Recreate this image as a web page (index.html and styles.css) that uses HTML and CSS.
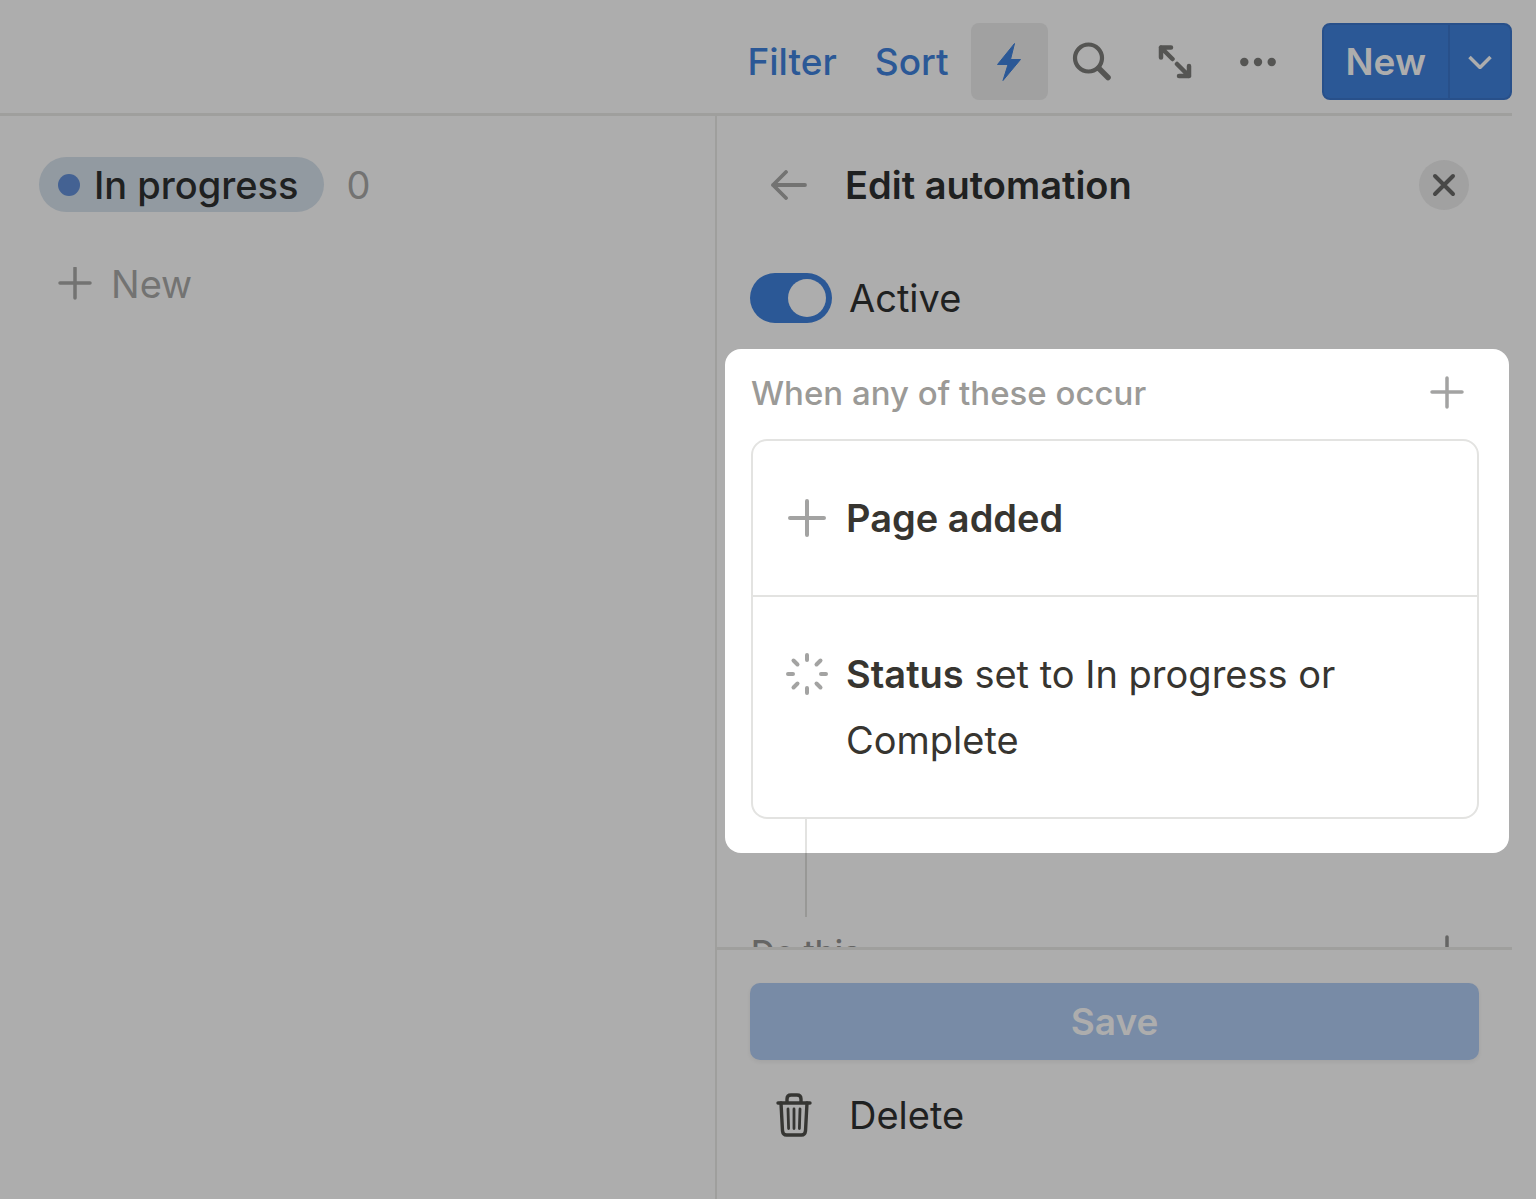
FILE: index.html
```html
<!DOCTYPE html>
<html lang="en">
<head>
    <meta charset="UTF-8">
    <meta name="viewport" content="width=device-width, initial-scale=1.0">
    <title>Edit automation</title>
    <link rel="stylesheet" href="styles.css">
</head>
<body>
<div class="app">
    <header class="toolbar">
        <button type="button" class="text-btn">Filter</button>
        <button type="button" class="text-btn">Sort</button>
        <button type="button" class="icon-btn active" aria-label="Automations">
            <svg width="24" height="38" viewBox="0 0 24 38" fill="#2b5896" stroke="#2b5896" stroke-linejoin="round">
                <path d="M17.5 .5.5 21.5h10.5L6 37.5l17.5-21h-10z"/>
            </svg>
        </button>
        <button type="button" class="icon-btn" aria-label="Search">
            <svg width="40" height="40" viewBox="0 0 40 40" fill="none" stroke="#555553" stroke-linecap="round">
                <circle cx="16.5" cy="16" r="13.5" stroke-width="4.2"/>
                <path d="M27 26.5l9 9" stroke-width="5.5"/>
            </svg>
        </button>
        <button type="button" class="icon-btn" aria-label="Expand">
            <svg width="34" height="34" viewBox="0 0 34 34" fill="none" stroke="#555553" stroke-width="4.5" stroke-linecap="round" stroke-linejoin="round">
                <path d="M3 12.500V2.500h10M3 2.500l11.500 11.500"/>
                <path d="M31 21v10H21M31 31 19 19"/>
            </svg>
        </button>
        <button type="button" class="icon-btn" aria-label="More">
            <svg width="36" height="10" viewBox="0 0 36 10" fill="#555553">
                <circle cx="4.3" cy="5" r="4.2"/>
                <circle cx="18" cy="5" r="4.2"/>
                <circle cx="31.7" cy="5" r="4.2"/>
            </svg>
        </button>
        <div class="split">
            <button type="button" class="split-main">New</button>
            <button type="button" class="split-more" aria-label="New options">
                <svg width="24" height="14" viewBox="0 0 24 14" fill="none" stroke="#adadad" stroke-width="3.5">
                    <path d="M1.5 2 12 12.5 22.5 2"/>
                </svg>
            </button>
        </div>
    </header>

    <div class="content">
        <main class="board">
            <div class="group">
                <span class="pill"><span class="dot"></span>In progress</span>
                <span class="count">0</span>
            </div>
            <button type="button" class="add-page">
                <svg width="34" height="34" viewBox="0 0 34 34" stroke="#737372" stroke-width="3.5" stroke-linecap="round">
                    <path d="M17 1v30M2 16h30"/>
                </svg>
                New
            </button>
        </main>

        <aside class="panel">
            <div class="panel-head">
                <button type="button" class="back" aria-label="Back">
                    <svg width="38" height="30" viewBox="0 0 38 30" fill="none" stroke="#737372" stroke-width="3.8" stroke-linecap="round" stroke-linejoin="round">
                        <path d="M35 15H3M16 2 3 15l13 13"/>
                    </svg>
                </button>
                <h1>Edit automation</h1>
                <button type="button" class="close" aria-label="Close">
                    <svg width="24" height="24" viewBox="0 0 24 24" stroke="#484847" stroke-width="4" stroke-linecap="round">
                        <path d="M3 3l18 18M21 3 3 21"/>
                    </svg>
                </button>
            </div>

            <div class="panel-body">
                <label class="toggle">
                    <input type="checkbox" checked>
                    Active
                </label>

                <section class="triggers">
                    <div class="section-head">
                        <h2>When any of these occur</h2>
                        <button type="button" aria-label="Add trigger">
                            <svg width="34" height="34" viewBox="0 0 34 34" stroke="#a3a3a2" stroke-width="3.5" stroke-linecap="round">
                                <path d="M17 2v29M2 16h30"/>
                            </svg>
                        </button>
                    </div>
                    <ul class="card">
                        <li>
                            <svg width="42" height="66" viewBox="0 0 42 66" stroke="#a3a3a2" stroke-width="4" stroke-linecap="round">
                                <path d="M21 16v34M4 33h34"/>
                            </svg>
                            <p><b>Page added</b></p>
                        </li>
                        <li>
                            <svg width="42" height="66" viewBox="0 0 42 66" stroke="#a3a3a2" stroke-width="4" stroke-linecap="round">
                                <path d="M21 14v5M21 47v5M2 33h5M35 33h5M7.5 19.5l4 4M34.5 19.5l-4 4M7.5 46.5l4-4M34.5 46.5l-4-4"/>
                            </svg>
                            <p><b>Status</b> set to In progress or Complete</p>
                        </li>
                    </ul>
                    <div class="connector"></div>
                </section>

                <section class="actions">
                    <div class="connector"></div>
                    <div class="section-head">
                        <h2>Do this</h2>
                        <button type="button" aria-label="Add action">
                            <svg width="34" height="34" viewBox="0 0 34 34" stroke="#656564" stroke-width="3.5" stroke-linecap="round">
                                <path d="M17 2v29M2 16h30"/>
                            </svg>
                        </button>
                    </div>
                </section>
            </div>

            <footer class="panel-foot">
                <button type="button" class="save">Save</button>
                <button type="button" class="delete">
                    <svg width="36" height="44" viewBox="0 0 36 44" fill="none" stroke="#363633" stroke-width="3.4" stroke-linecap="round" stroke-linejoin="round">
                        <path d="M2 10h32M11 10V6q0-4 4-4h6q4 0 4 4v4"/>
                        <path d="M5 10l1.5 28q.5 4 4 4h15q3.500 0 4-4L31 10"/>
                        <path d="M12 16l.6 19.500M18 16v19.500M24 16l-.6 19.500" stroke-width="2.8"/>
                    </svg>
                    Delete
                </button>
            </footer>
        </aside>
    </div>
</div>
</body>
</html>
```

FILE: styles.css
```css
* {
    margin: 0;
    padding: 0;
    box-sizing: border-box;
}

body {
    background: #adadad;
    color: #1f2121;
    font-family: Inter, "Liberation Sans", sans-serif;
    font-size: 38px;
}

button {
    background: transparent;
    border: 0;
    color: inherit;
    font: inherit;
    cursor: pointer;
}

svg {
    display: block;
    flex: none;
}

.app {
    height: 100vh;
    padding-right: 24px;
    display: flex;
    flex-direction: column;
}

/* top bar */
.toolbar {
    display: flex;
    justify-content: flex-end;
    align-items: center;
    gap: 6px;
    padding: 23px 0 13px;
    border-bottom: 3px solid #9f9f9d;
    font-size: 37px;
}

.text-btn {
    padding: 0 16px;
    color: #2b5896;
    font-weight: 500;
}

.icon-btn {
    width: 77px;
    height: 77px;
    border-radius: 8px;
    display: flex;
    justify-content: center;
    align-items: center;
}

.icon-btn.active {
    background: #a1a1a1;
}

.split {
    display: flex;
    height: 77px;
    margin-left: 19px;
    background: #2b5896;
    border: 2px solid #28508a;
    border-radius: 8px;
    color: #adadad;
}

.split-main {
    padding: 0 22px;
    font-weight: 600;
    border-right: 2px solid #28508a;
}

.split-more {
    width: 60px;
    display: flex;
    justify-content: center;
    align-items: center;
}

.content {
    flex: 1;
    min-height: 0;
    display: flex;
}

/* board */
.board {
    flex: 1;
    padding: 41px 39px;
    color: #737372;
}

.group {
    display: flex;
    align-items: center;
    gap: 23px;
}

.pill {
    height: 55px;
    padding: 0 25px 0 19px;
    border-radius: 28px;
    background: #929aa1;
    color: #1f2121;
    font-weight: 500;
    display: flex;
    align-items: center;
    gap: 14px;
}

.dot {
    width: 22px;
    height: 22px;
    border-radius: 50%;
    background: #446293;
}

.add-page {
    margin-top: 49px;
    padding-left: 19px;
    display: flex;
    align-items: center;
    gap: 19px;
}

/* automation panel */
.panel {
    width: 797px;
    border-left: 2px solid #9f9f9d;
    display: flex;
    flex-direction: column;
}

.panel-head {
    height: 138px;
    padding: 0 43px 0 53px;
    display: flex;
    align-items: center;
    gap: 37px;
}

.panel-head h1 {
    flex: 1;
    font-size: 38px;
    font-weight: 600;
}

.close {
    width: 50px;
    height: 50px;
    border-radius: 50%;
    background: #a1a1a1;
    display: flex;
    justify-content: center;
    align-items: center;
}

.panel-body {
    flex: 1;
    min-height: 0;
    overflow: hidden;
}

.toggle {
    padding: 19px 33px 26px;
    display: flex;
    align-items: center;
    gap: 17px;
    line-height: 50px;
}

.toggle input {
    appearance: none;
    width: 82px;
    height: 50px;
    padding: 6px;
    border-radius: 25px;
    background: #2b5896;
    display: flex;
}

.toggle input::before {
    content: "";
    width: 38px;
    height: 38px;
    border-radius: 50%;
    background: #adadad;
}

.toggle input:checked {
    justify-content: flex-end;
}

.triggers {
    margin: 0 3px 0 8px;
    padding: 9px 30px 0 26px;
    border-radius: 16px;
    background: #fff;
    color: #373530;
}

.section-head {
    height: 70px;
    padding-right: 15px;
    display: flex;
    justify-content: space-between;
    align-items: center;
    color: #9b9a97;
}

.section-head h2 {
    font-size: 33px;
    font-weight: 500;
}

.card {
    margin-top: 11px;
    border: 2px solid #e3e3e1;
    border-radius: 16px;
    list-style: none;
}

.card li {
    padding: 44px 33px;
    display: flex;
    gap: 18px;
    line-height: 66px;
}

.card li + li {
    border-top: 2px solid #e3e3e1;
}

.card b {
    font-weight: 600;
}

.connector {
    height: 34px;
    margin-left: 54px;
    border-left: 2px solid #e3e3e1;
}

.actions {
    padding: 0 33px 0 34px;
}

.actions .connector {
    height: 64px;
    border-color: #989896;
}

.actions .section-head {
    color: #656564;
}

.panel-foot {
    height: 252px;
    padding: 33px 33px 0;
    border-top: 3px solid #9f9f9d;
}

.save {
    width: 100%;
    height: 77px;
    border-radius: 10px;
    background: #788ba6;
    box-shadow: 0 2px 4px rgba(0, 0, 0, .06);
    color: #adadad;
    font-size: 37px;
    font-weight: 600;
}

.delete {
    margin-top: 32px;
    padding-left: 26px;
    display: flex;
    align-items: center;
    gap: 37px;
}
```
